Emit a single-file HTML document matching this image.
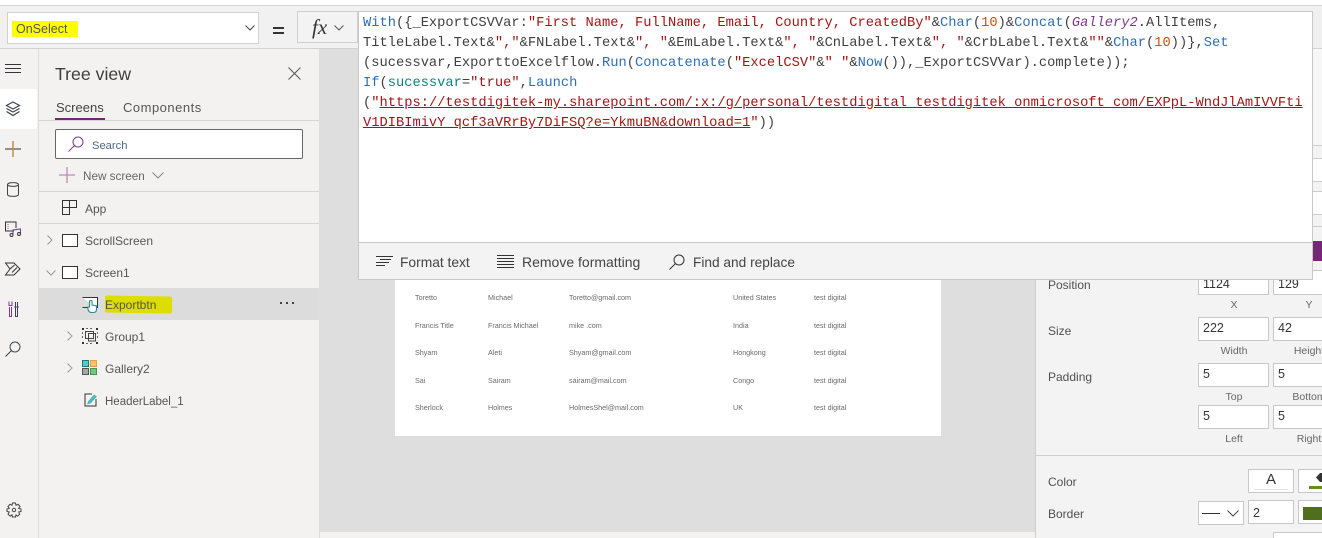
<!DOCTYPE html>
<html><head><meta charset="utf-8"><style>
html{margin:0;padding:0;width:1322px;height:538px;overflow:hidden}
body{margin:0;padding:0;width:1322px;height:538px;overflow:hidden;position:relative;background:#f3f2f1;font-family:"Liberation Sans",sans-serif;color:#444}
.a,.t,.i{position:absolute}
.t{white-space:nowrap;line-height:16px;font-size:12.5px;color:#505050}
.i{box-sizing:border-box;background:#fff;border:1px solid #c8c8c8;color:#333;font-size:12.5px;line-height:20px;padding-left:4px}
.s{font-size:7.2px;color:#6a6a6a;line-height:10px}
.c{font-size:10.5px;color:#666;text-align:center;width:60px}
svg{position:absolute;overflow:visible}
#code{position:absolute;left:363px;top:14px;width:945px;font-family:"Liberation Mono",monospace;font-size:13.74px;line-height:20px;color:#3f3f3f;white-space:pre}
.b{color:#2f6eb5}.r{color:#a31515}.o{color:#c8500a}.g{color:#7b3a8f;font-style:italic}.e{color:#0f7f80}
.u{color:#a31515;text-decoration:underline}
</style></head><body>
<!-- top bar -->
<div class="a" style="left:0;top:0;width:1322px;height:5px;background:#fff"></div>
<div class="a" style="left:0;top:5px;width:1322px;height:1px;background:#d6d6d6"></div>
<div class="a" style="left:0;top:6px;width:1322px;height:42px;background:#f1f1f1"></div>
<div class="a" style="left:0;top:48px;width:1322px;height:1px;background:#d2d2d2"></div>
<div class="a" style="left:7px;top:12px;width:252px;height:32px;box-sizing:border-box;background:#fff;border:1px solid #d0d0d0"></div>
<div class="a" style="left:12px;top:21px;width:66px;height:16px;background:#ffff00"></div>
<div class="t" style="left:16px;top:21px;font-size:12.5px;color:#555">OnSelect</div>
<svg style="left:245px;top:25px" width="10" height="6"><path d="M.5.5L5 5 9.5.5" fill="none" stroke="#444"/></svg>
<div class="a" style="left:273px;top:27px;width:11px;height:2px;background:#333"></div>
<div class="a" style="left:273px;top:32px;width:11px;height:2px;background:#333"></div>
<div class="a" style="left:297px;top:11px;width:61px;height:32px;box-sizing:border-box;border:1px solid #cfcfcf;background:#f3f3f3"></div>
<div class="t" style="left:312px;top:16px;font:italic 21px/22px 'Liberation Serif',serif;color:#333">fx</div>
<svg style="left:334px;top:25px" width="10" height="6"><path d="M.5.5L5 5 9.5.5" fill="none" stroke="#555"/></svg>

<!-- left rail -->
<div class="a" style="left:0;top:49px;width:38px;height:489px;background:#f3f2f1"></div>
<div class="a" style="left:38px;top:49px;width:1px;height:489px;background:#dcdcdc"></div>
<div class="a" style="left:0;top:89px;width:37px;height:40px;background:#fff;border-radius:0 2px 2px 0"></div>
<svg style="left:5px;top:64px" width="16" height="10"><path d="M0 .5H16M0 4.500H16M0 8.500H16" stroke="#3b3040"/></svg>
<svg style="left:5px;top:101px" width="16" height="16"><path d="M8 1L14.500 4.500 8 8 1.500 4.500Z M1.500 7.500L8 11 14.500 7.500 M1.500 10.500L8 14.500 14.500 10.500" fill="none" stroke="#3a444f" stroke-width="1.200"/></svg>
<svg style="left:5px;top:141px" width="16" height="16"><path d="M0 8H16" stroke="#6f6f73" stroke-width="1.500"/><path d="M8 0V16" stroke="#c98a4c" stroke-width="1.500"/></svg>
<svg style="left:7px;top:182px" width="12" height="15"><path d="M.5 2.500V12.500C.5 15 11.500 15 11.500 12.500V2.500C11.500 0 .5 0 .5 2.500C.5 5 11.500 5 11.500 2.500" fill="none" stroke="#444"/></svg>
<svg style="left:5px;top:221px" width="17" height="16"><path d="M9 10H.5V1H11V7" fill="none" stroke="#333"/><path d="M3 1V10" stroke="#777" stroke-dasharray="1 1"/><path d="M8 14V9L15.500 8V13" fill="none" stroke="#7b3a8f"/><circle cx="6.500" cy="14" r="1.500" fill="none" stroke="#333"/><circle cx="14" cy="13" r="1.500" fill="none" stroke="#333"/></svg>
<svg style="left:5px;top:262px" width="16" height="14"><path d="M.5 1H9L15 7 9 13H.5L5 7Z M5 7L9.500 3 M7 10.500L12 5.500" fill="none" stroke="#333"/></svg>
<svg style="left:8px;top:301px" width="11" height="17"><path d="M1.500 6V15.500H3.500V6M1 .5V4.500H4V.5" fill="none" stroke="#7b3a8f"/><path d="M7.500 1V15.500H9.500V1" fill="none" stroke="#3f3f60"/><path d="M6 6H11" stroke="#7b3a8f"/></svg>
<svg style="left:5px;top:341px" width="16" height="16"><circle cx="10" cy="6" r="5" fill="none" stroke="#3f4a55"/><path d="M6.500 9.500L.5 15.500" stroke="#3f3f3f"/></svg>
<svg style="left:6px;top:502px" width="16" height="16" viewBox="0 0 16 16"><path d="M6.500 1H9.500L10 3.300 12.200 2.300 14 4.500 12.600 6.300 15 7V9.500L12.700 10 13.700 12.200 11.500 14.200 10 12.800 9.500 15H6.500L6 12.800 4.200 14.200 2 12.200 3.300 10 1 9.500V7L3.300 6.300 2 4.500 4 2.300 6 3.300Z" fill="none" stroke="#444"/><circle cx="8" cy="8" r="1.700" fill="none" stroke="#444"/></svg>

<!-- tree panel -->
<div class="a" style="left:39px;top:49px;width:280px;height:489px;background:#f3f2f1"></div>
<div class="t" style="left:55px;top:64px;font-size:17.700px;line-height:20px;color:#3f3f3f">Tree view</div>
<svg style="left:288px;top:67px" width="13" height="13"><path d="M.5.5L12.500 12.500M12.500.5L.5 12.500" stroke="#555" stroke-width="1"/></svg>
<div class="t" style="left:56px;top:100px;font-size:13px;color:#444">Screens</div>
<div class="t" style="left:123px;top:100px;font-size:13px;letter-spacing:.5px;color:#555">Components</div>
<div class="a" style="left:55px;top:118px;width:50px;height:2px;background:#742774"></div>
<div class="a" style="left:39px;top:120px;width:280px;height:1px;background:#d6d6d6"></div>
<div class="a" style="left:55px;top:129px;width:248px;height:30px;box-sizing:border-box;background:#fff;border:1px solid #666;border-radius:2px"></div>
<svg style="left:68px;top:136px" width="16" height="16"><circle cx="10" cy="6" r="5" fill="none" stroke="#7b3a8f"/><path d="M6.500 9.500L.5 15.500" stroke="#7b3a8f"/></svg>
<div class="t" style="left:92px;top:138px;font-size:11.200px;color:#4a6a85">Search</div>
<svg style="left:59px;top:167px" width="16" height="16"><path d="M0 8H16M8 0V16" stroke="#b98bb8" stroke-width="1.300"/></svg>
<div class="t" style="left:83px;top:169px;font-size:11.700px;color:#666">New screen</div>
<svg style="left:152px;top:172px" width="12" height="7"><path d="M.5.5L6 6 11.500.5" fill="none" stroke="#888"/></svg>
<div class="a" style="left:39px;top:191px;width:280px;height:1px;background:#d6d6d6"></div>
<svg style="left:62px;top:200px" width="15" height="15"><path d="M.5.5H14.500V7.500H7.500V14.500H.5ZM.5 7.500H7.500M7.500.5V7.500" fill="none" stroke="#333"/></svg>
<div class="t" style="left:85px;top:201px;font-size:12px;color:#555">App</div>
<div class="a" style="left:39px;top:223px;width:280px;height:1px;background:#d6d6d6"></div>

<svg style="left:47px;top:235px" width="6" height="10"><path d="M.5.5L5 5 .5 9.500" fill="none" stroke="#999"/></svg>
<div class="a" style="left:62px;top:234px;width:16px;height:13px;box-sizing:border-box;border:1px solid #333;background:#fff"></div>
<div class="t" style="left:85px;top:233px;font-size:12px;color:#555">ScrollScreen</div>
<svg style="left:46px;top:270px" width="10" height="6"><path d="M.5.5L5 5 9.500.5" fill="none" stroke="#999"/></svg>
<div class="a" style="left:62px;top:266px;width:16px;height:13px;box-sizing:border-box;border:1px solid #333;background:#fff"></div>
<div class="t" style="left:85px;top:265px;font-size:12px;color:#555">Screen1</div>

<div class="a" style="left:39px;top:288px;width:280px;height:32px;background:#dcdcdc"></div>
<div class="a" style="left:105px;top:296px;width:67px;height:17px;background:#dddd00;border-radius:2px;transform:rotate(.8deg)"></div>
<svg style="left:82px;top:297px" width="17" height="16"><path d="M.5.500H15.500V10.500H13M6 10.500H.5Z" fill="#fff" stroke="#333"/><path d="M7.500 4.500V10H6C5.500 12.500 6.500 15 9 15.500H11.500C13.500 15.500 14.500 14 14.500 12V9L10 8V4.500C10 3.300 7.500 3.300 7.500 4.500Z" fill="#fff" stroke="#1f8f8f" stroke-width="1.100"/></svg>
<div class="t" style="left:105px;top:297px;font-size:12px;color:#555">Exportbtn</div>
<div class="a" style="left:280px;top:302px;width:2px;height:2px;background:#3f3f3f;box-shadow:6px 0 #3f3f3f,12px 0 #3f3f3f"></div>

<svg style="left:67px;top:331px" width="6" height="10"><path d="M.5.5L5 5 .5 9.500" fill="none" stroke="#999"/></svg>
<svg style="left:82px;top:328px" width="16" height="16"><path d="M0 0H2V2H0ZM14 0H16V2H14ZM0 14H2V16H0ZM14 14H16V16H14Z" fill="#333"/><path d="M4 .5H12M4 15.500H12M.5 4V12M15.500 4V12" stroke="#666" stroke-dasharray="2 2"/><path d="M3.500 3.500H11.500V10.500H3.500ZM6.500 5.500H13.500V13H6.500Z" fill="none" stroke="#444"/></svg>
<div class="t" style="left:105px;top:329px;font-size:12px;color:#555">Group1</div>
<svg style="left:67px;top:363px" width="6" height="10"><path d="M.5.5L5 5 .5 9.500" fill="none" stroke="#999"/></svg>
<div class="a" style="left:82px;top:360px;width:7px;height:7px;box-sizing:border-box;background:#5fc5c5;border:1px solid #0f7f80"></div>
<div class="a" style="left:90px;top:360px;width:7px;height:7px;box-sizing:border-box;background:#ffc46b;border:1px solid #e6a03c"></div>
<div class="a" style="left:82px;top:368px;width:7px;height:7px;box-sizing:border-box;background:#a6a6a6;border:1px solid #555"></div>
<div class="a" style="left:90px;top:368px;width:7px;height:7px;box-sizing:border-box;background:#7cc47c;border:1px solid #3f9a4f"></div>
<div class="t" style="left:105px;top:361px;font-size:12px;color:#555">Gallery2</div>
<svg style="left:84px;top:393px" width="14" height="14"><path d="M8 1H1V13H12V6" fill="none" stroke="#333"/><path d="M3 11.500L4 8.500 10 1.500 13 3.500 6.500 10.500Z" fill="#4db8b8"/></svg>
<div class="t" style="left:105px;top:394px;font-size:11.500px;color:#555">HeaderLabel_1</div>

<!-- canvas -->
<div class="a" style="left:319px;top:49px;width:717px;height:489px;background:#dedede"></div>
<div class="a" style="left:320px;top:532px;width:716px;height:6px;background:#f3f2f1"></div>
<div class="a" style="left:395px;top:279px;width:546px;height:157px;background:#fff"></div>
<div class="t s" style="left:415px;top:293px">Toretto</div><div class="t s" style="left:488px;top:293px">Michael</div><div class="t s" style="left:569px;top:293px">Toretto@gmail.com</div><div class="t s" style="left:733px;top:293px">United States</div><div class="t s" style="left:814px;top:293px">test digital</div>
<div class="t s" style="left:415px;top:321px">Francis Title</div><div class="t s" style="left:488px;top:321px">Francis Michael</div><div class="t s" style="left:569px;top:321px">mike .com</div><div class="t s" style="left:733px;top:321px">India</div><div class="t s" style="left:814px;top:321px">test digital</div>
<div class="t s" style="left:415px;top:348px">Shyam</div><div class="t s" style="left:488px;top:348px">Aleti</div><div class="t s" style="left:569px;top:348px">Shyam@gmail.com</div><div class="t s" style="left:733px;top:348px">Hongkong</div><div class="t s" style="left:814px;top:348px">test digital</div>
<div class="t s" style="left:415px;top:376px">Sai</div><div class="t s" style="left:488px;top:376px">Sairam</div><div class="t s" style="left:569px;top:376px">sairam@mail.com</div><div class="t s" style="left:733px;top:376px">Congo</div><div class="t s" style="left:814px;top:376px">test digital</div>
<div class="t s" style="left:415px;top:403px">Sherlock</div><div class="t s" style="left:488px;top:403px">Holmes</div><div class="t s" style="left:569px;top:403px">HolmesShel@mail.com</div><div class="t s" style="left:733px;top:403px">UK</div><div class="t s" style="left:814px;top:403px">test digital</div>

<!-- right panel -->
<div class="a" style="left:1035px;top:49px;width:287px;height:489px;background:#f3f3f3;border-left:1px solid #cfcfcf;box-sizing:border-box"></div>
<div class="a" style="left:1313px;top:6px;width:9px;height:42px;background:#f0f0f0"></div>
<div class="a" style="left:1313px;top:49px;width:9px;height:96px;background:#f7f7f7"></div>
<div class="a" style="left:1313px;top:145px;width:9px;height:1px;background:#ccc"></div>
<div class="a" style="left:1313px;top:158px;width:9px;height:24px;box-sizing:border-box;background:#fff;border-top:1px solid #ccc;border-bottom:1px solid #ccc"></div>
<div class="a" style="left:1313px;top:191px;width:9px;height:24px;box-sizing:border-box;background:#fff;border-top:1px solid #ccc;border-bottom:1px solid #ccc"></div>
<div class="a" style="left:1313px;top:226px;width:9px;height:1px;background:#ccc"></div>
<div class="a" style="left:1313px;top:241px;width:9px;height:20px;background:#742774"></div>
<div class="a" style="left:1313px;top:271px;width:9px;height:1px;background:#ccc"></div>

<div class="t" style="left:1048px;top:277px;font-size:12px">Position</div>
<div class="i" style="left:1198px;top:270px;width:71px;height:25px;padding-top:3px">1124</div>
<div class="i" style="left:1273px;top:270px;width:60px;height:25px;padding-top:3px">129</div>
<div class="t c" style="left:1204px;top:297px">X</div><div class="t c" style="left:1279px;top:297px">Y</div>
<div class="t" style="left:1048px;top:323px;font-size:12px">Size</div>
<div class="i" style="left:1198px;top:317px;width:71px;height:24px">222</div>
<div class="i" style="left:1273px;top:317px;width:60px;height:24px">42</div>
<div class="t c" style="left:1204px;top:343px">Width</div><div class="t c" style="left:1279px;top:343px">Height</div>
<div class="t" style="left:1048px;top:369px;font-size:12px">Padding</div>
<div class="i" style="left:1198px;top:363px;width:71px;height:24px">5</div>
<div class="i" style="left:1273px;top:363px;width:60px;height:24px">5</div>
<div class="t c" style="left:1204px;top:389px">Top</div><div class="t c" style="left:1279px;top:389px">Bottom</div>
<div class="i" style="left:1198px;top:405px;width:71px;height:24px">5</div>
<div class="i" style="left:1273px;top:405px;width:60px;height:24px">5</div>
<div class="t c" style="left:1204px;top:431px">Left</div><div class="t c" style="left:1279px;top:431px">Right</div>
<div class="a" style="left:1036px;top:455px;width:286px;height:1px;background:#cfcfcf"></div>
<div class="t" style="left:1048px;top:474px;font-size:12px">Color</div>
<div class="i" style="left:1248px;top:469px;width:46px;height:24px;padding:0;text-align:center;font-size:15px">A</div>
<div class="a" style="left:1254px;top:489px;width:34px;height:1px;background:#e2e2e2"></div>
<div class="i" style="left:1298px;top:469px;width:40px;height:24px"></div>
<div class="a" style="left:1316px;top:473px;width:8px;height:9px;background:#333;clip-path:polygon(50% 0,100% 0,100% 100%,50% 100%,0 50%)"></div>
<div class="a" style="left:1309px;top:486px;width:13px;height:3px;background:#5f8f20"></div>
<div class="t" style="left:1048px;top:506px;font-size:12px">Border</div>
<div class="i" style="left:1198px;top:501px;width:46px;height:24px"></div>
<div class="a" style="left:1202px;top:513px;width:18px;height:1px;background:#333"></div>
<svg style="left:1227px;top:510px" width="12" height="7"><path d="M.5.5L6 6 11.500.5" fill="none" stroke="#444"/></svg>
<div class="i" style="left:1248px;top:500px;width:46px;height:24px;padding-top:2px">2</div>
<div class="i" style="left:1298px;top:500px;width:40px;height:24px"></div>
<div class="a" style="left:1303px;top:507px;width:19px;height:13px;background:#4f6f1f"></div>
<div class="i" style="left:1273px;top:532px;width:60px;height:24px"></div>

<!-- formula editor -->
<div class="a" style="left:358px;top:11px;width:955px;height:269px;box-sizing:border-box;background:#fff;border:1px solid #c8c8c8"></div>
<div class="a" style="left:359px;top:242px;width:953px;height:37px;background:#f3f3f3;border-top:1px solid #c8c8c8;box-sizing:border-box"></div>
<div id="code"><span class="b">With</span>({_ExportCSVVar:<span class="r">"First Name, FullName, Email, Country, CreatedBy"</span>&amp;<span class="b">Char</span>(<span class="o">10</span>)&amp;<span class="b">Concat</span>(<span class="g">Gallery2</span>.AllItems,
TitleLabel.Text&amp;<span class="r">","</span>&amp;FNLabel.Text&amp;<span class="r">", "</span>&amp;EmLabel.Text&amp;<span class="r">", "</span>&amp;CnLabel.Text&amp;<span class="r">", "</span>&amp;CrbLabel.Text&amp;<span class="r">""</span>&amp;<span class="b">Char</span>(<span class="o">10</span>))},<span class="b">Set</span>
(sucessvar,ExporttoExcelflow.<span class="b">Run</span>(<span class="b">Concatenate</span>(<span class="r">"ExcelCSV"</span>&amp;<span class="r">" "</span>&amp;<span class="b">Now</span>()),_ExportCSVVar).complete));
<span class="b">If</span>(<span class="e">sucessvar</span>=<span class="r">"true"</span>,<span class="b">Launch</span>
(<span class="r">"</span><span class="u">https://testdigitek-my.sharepoint.com/:x:/g/personal/testdigital_testdigitek_onmicrosoft_com/EXPpL-WndJlAmIVVFti</span>
<span class="u">V1DIBImivY_qcf3aVRrBy7DiFSQ?e=YkmuBN&amp;download=1</span><span class="r">"</span>))</div>

<svg style="left:376px;top:256px" width="17" height="12"><path d="M0 .5H17M4 3.500H15M0 6.500H13M0 9.500H9" stroke="#333"/></svg>
<div class="t" style="left:400px;top:255px;font-size:13.800px;color:#444">Format text</div>
<svg style="left:497px;top:255px" width="17" height="14"><path d="M0 .5H17M0 3.500H17M0 6.500H17M0 9.500H17M0 12.500H17" stroke="#333"/></svg>
<div class="t" style="left:522px;top:254px;font-size:14px;color:#444">Remove formatting</div>
<svg style="left:669px;top:254px" width="16" height="16"><circle cx="10" cy="6" r="5" fill="none" stroke="#333"/><path d="M6.500 9.500L.5 15.500" stroke="#333"/></svg>
<div class="t" style="left:693px;top:255px;font-size:13.700px;color:#444">Find and replace</div>
</body></html>
